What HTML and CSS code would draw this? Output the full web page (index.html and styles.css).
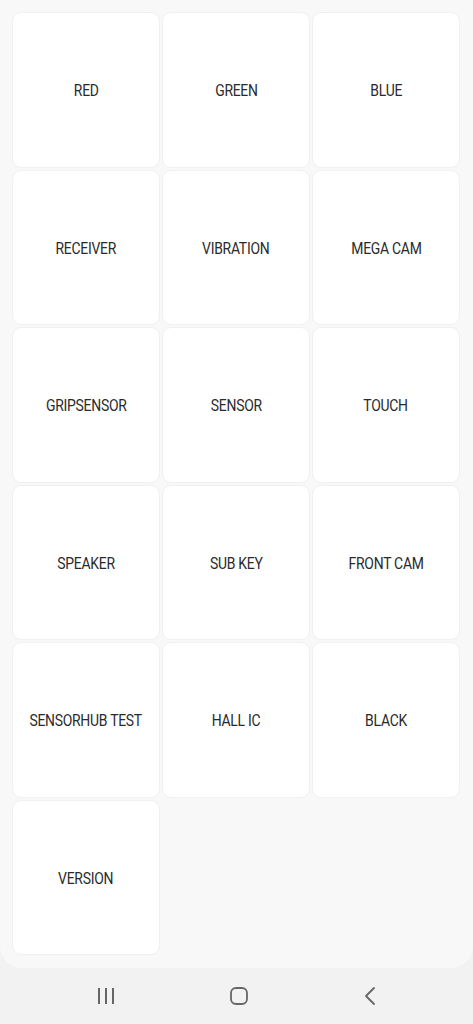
FILE: index.html
```html
<!DOCTYPE html>
<html>
<head>
<meta charset="utf-8">
<link rel="stylesheet" href="styles.css">
</head>
<body>
<div class="screen">
  <div class="panel">
    <div class="grid">
      <div class="cell"><span class="label">RED</span></div>
      <div class="cell"><span class="label">GREEN</span></div>
      <div class="cell"><span class="label">BLUE</span></div>
      <div class="cell"><span class="label">RECEIVER</span></div>
      <div class="cell"><span class="label">VIBRATION</span></div>
      <div class="cell"><span class="label">MEGA CAM</span></div>
      <div class="cell"><span class="label">GRIPSENSOR</span></div>
      <div class="cell"><span class="label">SENSOR</span></div>
      <div class="cell"><span class="label">TOUCH</span></div>
      <div class="cell"><span class="label">SPEAKER</span></div>
      <div class="cell"><span class="label">SUB KEY</span></div>
      <div class="cell"><span class="label">FRONT CAM</span></div>
      <div class="cell"><span class="label">SENSORHUB TEST</span></div>
      <div class="cell"><span class="label">HALL IC</span></div>
      <div class="cell"><span class="label">BLACK</span></div>
      <div class="cell"><span class="label">VERSION</span></div>
    </div>
  </div>
  <div class="navbar">
    <div class="nav-item">
      <svg width="20" height="20" viewBox="0 0 20 20"><g stroke="#666" stroke-width="2" fill="none"><line x1="3" y1="2" x2="3" y2="18"/><line x1="10" y1="2" x2="10" y2="18"/><line x1="17" y1="2" x2="17" y2="18"/></g></svg>
    </div>
    <div class="nav-item">
      <svg width="20" height="20" viewBox="0 0 20 20"><rect x="2" y="2" width="16" height="16" rx="5" stroke="#666" stroke-width="1.8" fill="none"/></svg>
    </div>
    <div class="nav-item">
      <svg width="20" height="20" viewBox="0 0 20 20"><polyline points="13,2 5,10 13,18" stroke="#666" stroke-width="1.8" fill="none" stroke-linejoin="round" stroke-linecap="round"/></svg>
    </div>
  </div>
</div>
</body>
</html>
```
FILE: styles.css
```css
html, body {
  margin: 0;
  padding: 0;
  background: #f2f2f2;
}
.screen {
  width: 473px;
  height: 1024px;
  display: flex;
  flex-direction: column;
  font-family: Roboto, "Liberation Sans", sans-serif;
}
.panel {
  background: #f8f8f8;
  height: 968px;
  box-sizing: border-box;
  padding: 12px 13px 0 12px;
  border-radius: 0 0 22px 22px;
}
.grid {
  display: grid;
  grid-template-columns: repeat(3, 148px);
  grid-auto-rows: 155.5px;
  column-gap: 2px;
  row-gap: 2px;
}
.cell {
  background: #fff;
  border: 1px solid #f0f0f0;
  border-radius: 9px;
  display: flex;
  align-items: center;
  justify-content: center;
  box-sizing: border-box;
}
.label {
  font-size: 16px;
  color: #2a2a2a;
  letter-spacing: -0.3px;
  white-space: nowrap;
  padding-top: 2px;
  transform: scaleX(0.87);
}
.navbar {
  flex: 1;
  display: flex;
  align-items: center;
  justify-content: space-between;
  padding: 0 92px 0 96px;
}
.nav-item {
  width: 20px;
  height: 20px;
  display: flex;
}
```
